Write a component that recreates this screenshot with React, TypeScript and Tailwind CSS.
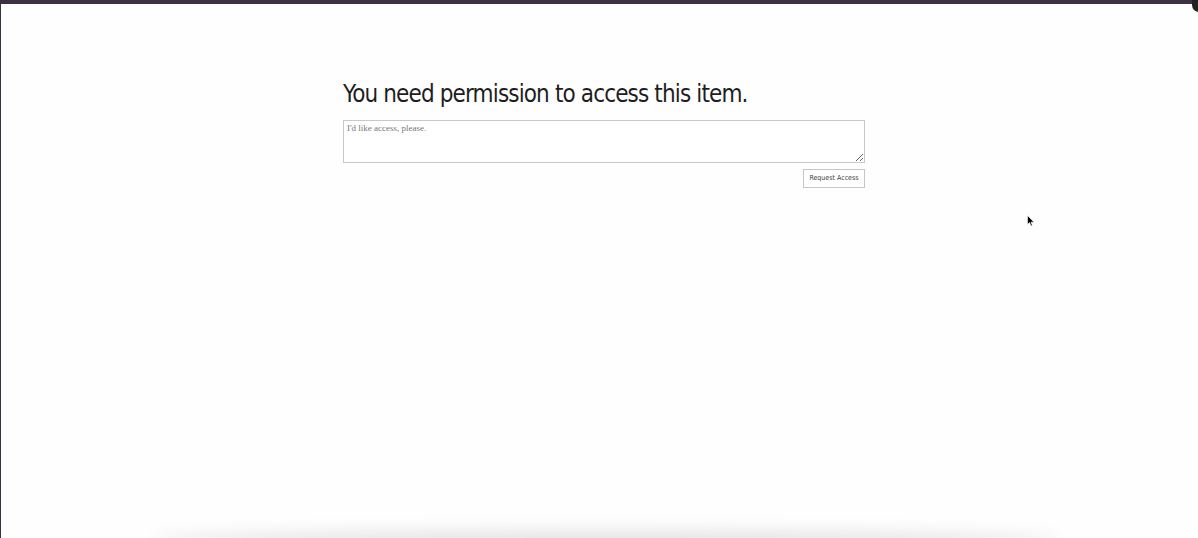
export default function App() {
  return (
    <div className="relative h-[538px] w-[1198px] overflow-hidden bg-[#3b3140]">
      <div className="absolute left-px right-0 top-[4px] bottom-0 bg-[#fefefe]">
        <div className="flex flex-col pl-[342px] pt-[76px]">
          <h1 className="text-[24px] leading-[28px] text-[#1e1e1e] font-['DejaVu_Sans_Condensed','DejaVu_Sans',sans-serif] tracking-[-0.87px]">
            You need permission to access this item.
          </h1>
          <textarea
            className="mt-[12px] h-[43px] w-[522px] resize-y border border-[#c8c8c8] bg-white px-[3px] py-[1px] text-[9px] text-[#777] outline-none font-['Liberation_Serif',serif]"
            defaultValue="I'd like access, please."
          />
          <div className="flex w-[522px] justify-end pt-[6px]">
            <button className="h-[19px] w-[62px] border border-[#c6c6c6] bg-white text-[7px] text-[#444] font-['DejaVu_Sans_Condensed','DejaVu_Sans',sans-serif]">
              Request Access
            </button>
          </div>
        </div>
        <div className="absolute bottom-[-20px] left-[150px] h-[20px] w-[910px] rounded-[50%] shadow-[0_-6px_18px_rgba(0,0,0,0.12)]" />
      </div>
      <div className="absolute right-[-8px] top-[-8px] h-[20px] w-[14px] rounded-full bg-[#222]" />
      <svg className="absolute left-[1027px] top-[215px]" width="8" height="12" viewBox="0 0 8 12">
        <path d="M0.5 0.5 L0.5 9.5 L2.6 7.6 L4 11 L5.4 10.4 L4 7.2 L7 7.2 Z" fill="#000" stroke="#fff" strokeWidth="0.6" />
      </svg>
    </div>
  );
}
